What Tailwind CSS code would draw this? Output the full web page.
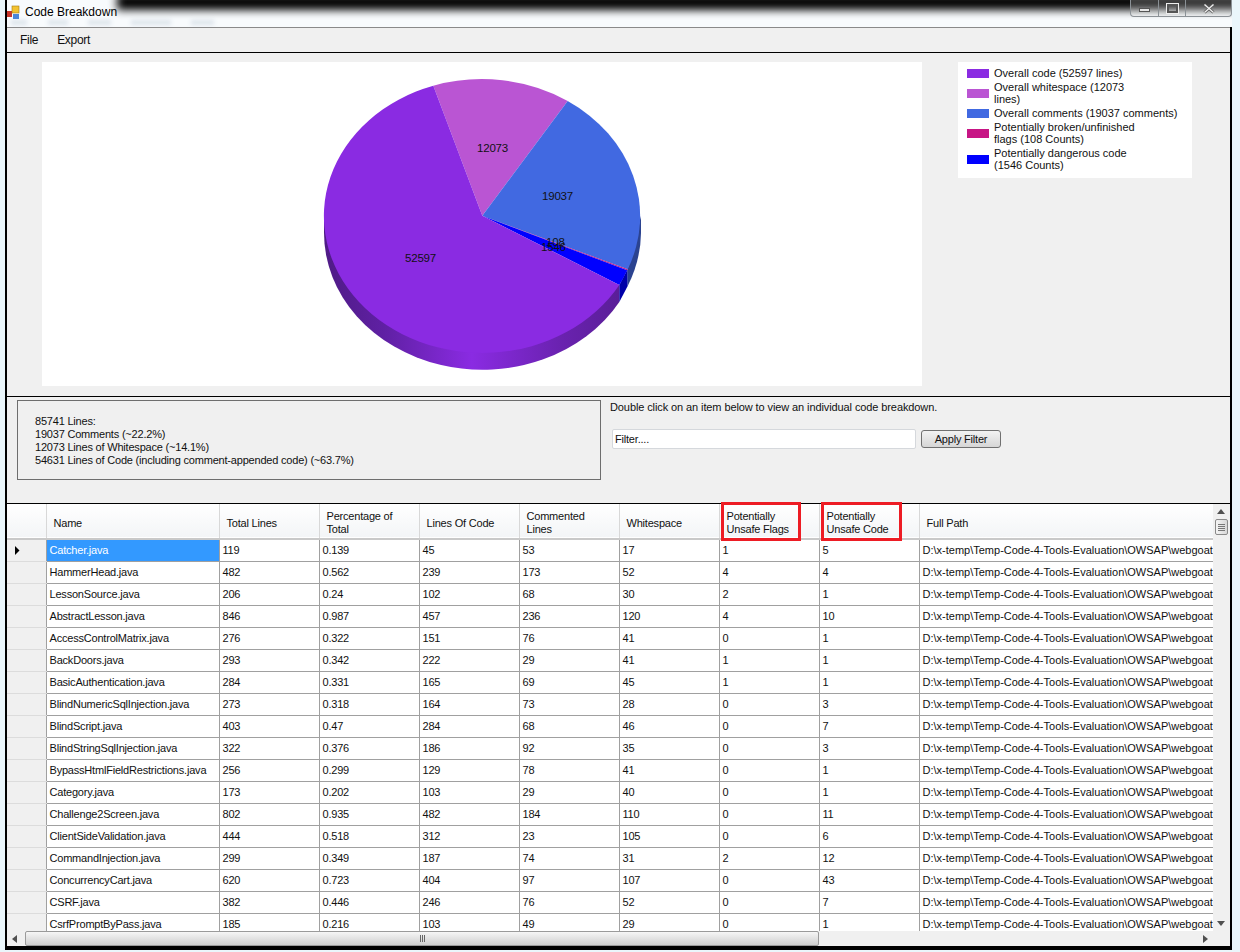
<!DOCTYPE html>
<html>
  <head>
    <meta charset="UTF-8" />
    <title>Code Breakdown</title>
    <script src="https://cdn.jsdelivr.net/npm/@tailwindcss/browser@4"></script>
  </head>
  <body class="w-[1240px] h-[952px] overflow-hidden bg-[#eaf6fb] font-['Liberation_Sans',sans-serif] text-[11px] tracking-[-0.2px] text-[#111]">
    <div class="pl-[5px] pr-[8px] h-[950px] flex flex-col">
      <!-- title bar -->
      <div class="h-[27px] shrink-0 flex items-start relative overflow-hidden bg-[#f8fbfd] border-l-2 border-black">
        <!-- blurred desktop behind the glass -->
        <div class="absolute left-[110px] right-[-20px] top-[-6px] h-[16px] bg-black blur-[4px]"></div>
        <div class="absolute left-[4px] top-[20px] w-[16px] h-[5px] bg-[#9fb4c4]/30 blur-[2px]"></div>
        <div class="absolute left-[41px] top-[20px] w-[20px] h-[5px] bg-[#9fb4c4]/30 blur-[2px]"></div>
        <div class="absolute left-[81px] top-[20px] w-[23px] h-[5px] bg-[#9fb4c4]/30 blur-[2px]"></div>
        <div class="absolute left-[124px] top-[20px] w-[40px] h-[5px] bg-[#9fb4c4]/30 blur-[2px]"></div>
        <div class="absolute left-[184px] top-[20px] w-[23px] h-[5px] bg-[#9fb4c4]/30 blur-[2px]"></div>
        <svg class="mt-[5px] -ml-[1px] relative" width="16" height="16" viewBox="0 0 16 16">
          <rect x="1" y="6" width="5" height="6" fill="#c8352a" />
          <rect x="6" y="1" width="7" height="7" fill="#f3c22f" stroke="#a67c12" stroke-width="0.6" />
          <rect x="7" y="9" width="6" height="5" fill="#4b86d8" />
        </svg>
        <span class="mt-[5px] ml-[3px] text-[12px] tracking-normal leading-[15px] text-black relative">Code Breakdown</span>
        <div class="absolute right-[0px] top-0 w-[102px] h-[17px] flex border border-t-0 border-[#8b9196] rounded-b-[4px] bg-white/20">
          <div class="w-[28px] border-r border-[#8b9196] flex justify-center items-end pb-[4px]"><div class="w-[11px] h-[4px] bg-[#e6e6e6] border border-[#555]"></div></div>
          <div class="w-[27px] border-r border-[#8b9196] flex justify-center items-center"><div class="w-[11px] h-[9px] border-2 border-[#555] outline outline-[#eee]"></div></div>
          <div class="flex-1 flex justify-center items-center">
            <svg width="12" height="11" viewBox="0 0 12 11"><path d="M1.5 1.5 L10.5 9.5 M10.5 1.5 L1.5 9.5" stroke="#555" stroke-width="3" /><path d="M1.5 1.5 L10.5 9.5 M10.5 1.5 L1.5 9.5" stroke="#eee" stroke-width="1.4" /></svg>
          </div>
        </div>
      </div>

      <div class="flex-1 flex flex-col border-l-2 border-r-2 border-b-4 border-black bg-[#f0f0f0] min-h-0">
        <!-- menu -->
        <div class="h-[26px] shrink-0 bg-[#f0f0f0] border-b border-black border-t border-t-[#8a8a8a] flex items-center gap-[19px] pl-[13px] text-[12px] tracking-[-0.3px]">
          <span>File</span>
          <span>Export</span>
        </div>

        <!-- chart area -->
        <div class="h-[344px] shrink-0 border-b border-black pt-[9px] pl-[35px] flex items-start">
          <div class="w-[880px] h-[324px] bg-white shrink-0">
            <svg width="880" height="324" viewBox="42 62 880 324" font-family="Liberation Sans" font-size="11.5" fill="#111">
              <defs>
                <linearGradient id="sidePurple" x1="0" x2="1" y1="0" y2="0">
                  <stop offset="0" stop-color="#4f1b86" />
                  <stop offset="0.2" stop-color="#5f20a3" />
                  <stop offset="0.5" stop-color="#8a2be2" />
                  <stop offset="0.8" stop-color="#6a22b0" />
                  <stop offset="1" stop-color="#5a1e98" />
                </linearGradient>
              </defs>
              <!-- side wall -->
              <path d="M324 216 L324 233 A158.5 137 0 0 0 619.3 302 L619.3 285 Z" fill="url(#sidePurple)" />
              <path d="M619.3 285 L619.3 302 L627.7 286 L627.7 269 Z" fill="#0000a8" />
              <path d="M627.7 269 L627.7 286 A158.5 137 0 0 0 641 233 L641 216 Z" fill="#2b4390" />
              <!-- top face -->
              <path d="M482.3 215.7 L433.3 85.7 A158.5 137 0 0 1 567.7 101 Z" fill="#ba55d3" />
              <path d="M482.3 215.7 L567.7 101 A158.5 137 0 0 1 627.7 269.3 Z" fill="#4169e1" />
              <path d="M482.3 215.7 L627.7 269.3 L627.2 270.3 Z" fill="#c71585" />
              <path d="M482.3 215.7 L627.2 270.3 A158.5 137 0 0 1 619.3 285 Z" fill="#0000ff" />
              <path d="M482.3 215.7 L619.3 285 A158.5 137 0 1 1 433.3 85.7 Z" fill="#8a2be2" />
              <text x="477" y="152">12073</text>
              <text x="542" y="200">19037</text>
              <text x="405" y="262">52597</text>
              <text x="546" y="246">108</text>
              <text x="541" y="251">1546</text>
            </svg>
          </div>
          <!-- legend -->
          <div class="w-[234px] h-[116px] ml-[36px] bg-white pt-[5px] pl-[9px] flex flex-col leading-[12px] tracking-normal">
            <div class="flex items-center h-[12px] mb-[2px]"><span class="w-[22px] h-[9px] bg-[#8a2be2] mr-[5px]"></span><span class="whitespace-nowrap">Overall code (52597 lines)</span></div>
            <div class="flex items-center h-[24px] mb-[2px]"><span class="w-[22px] h-[9px] bg-[#ba55d3] mr-[5px]"></span><span class="whitespace-nowrap">Overall whitespace (12073<br />lines)</span></div>
            <div class="flex items-center h-[12px] mb-[2px]"><span class="w-[22px] h-[9px] bg-[#4169e1] mr-[5px]"></span><span class="whitespace-nowrap">Overall comments (19037 comments)</span></div>
            <div class="flex items-center h-[24px] mb-[2px]"><span class="w-[22px] h-[9px] bg-[#c71585] mr-[5px]"></span><span class="whitespace-nowrap">Potentially broken/unfinished<br />flags (108 Counts)</span></div>
            <div class="flex items-center h-[24px]"><span class="w-[22px] h-[9px] bg-[#0000ff] mr-[5px]"></span><span class="whitespace-nowrap">Potentially dangerous code<br />(1546 Counts)</span></div>
          </div>
        </div>

        <!-- summary and filter -->
        <div class="h-[107px] shrink-0 border-b border-black flex items-start pt-[3px] pl-[10px]">
          <div class="w-[584px] h-[80px] border border-[#6e6e6e] pt-[14px] pl-[17px] leading-[13px]">
            <div>85741 Lines:</div>
            <div>19037 Comments (~22.2%)</div>
            <div>12073 Lines of Whitespace (~14.1%)</div>
            <div>54631 Lines of Code (including comment-appended code) (~63.7%)</div>
          </div>
          <div class="ml-[9px] flex flex-col">
            <div class="leading-[14px] tracking-[-0.1px]">Double click on an item below to view an individual code breakdown.</div>
            <div class="flex items-center mt-[15px] ml-[2px]">
              <div class="w-[304px] h-[20px] bg-white border border-[#d5d8dc] rounded-[2px] pl-[2px] leading-[18px]">Filter....</div>
              <div class="w-[80px] h-[18px] ml-[5px] border border-[#707070] rounded-[3px] bg-gradient-to-b from-[#f2f2f2] to-[#d6d6d6] text-center leading-[16px]">Apply Filter</div>
            </div>
          </div>
        </div>

        <!-- grid -->
        <div class="flex-1 min-h-0 flex flex-col">
          <div class="flex-1 min-h-0 flex">
            <div class="w-[1206px] overflow-hidden">
              <table class="table-fixed border-collapse w-[1206px]">
                <colgroup>
                  <col class="w-[39px]" /><col class="w-[173px]" /><col class="w-[100px]" /><col class="w-[100px]" /><col class="w-[100px]" /><col class="w-[100px]" /><col class="w-[100px]" /><col class="w-[100px]" /><col class="w-[100px]" /><col class="w-[294px]" />
                </colgroup>
                <thead>
                  <tr class="h-[35px] bg-gradient-to-b from-white to-[#f3f5f7] text-left leading-[13px] border-b-2 border-[#c9c9c9]">
                    <th class="font-normal border-r border-[#d8d8d8]"></th>
                    <th class="font-normal pl-[7px] pt-[4px] border-r border-[#d8d8d8]">Name</th>
                    <th class="font-normal pl-[7px] pt-[4px] border-r border-[#d8d8d8]">Total Lines</th>
                    <th class="font-normal pl-[7px] pt-[4px] border-r border-[#d8d8d8]">Percentage of<br />Total</th>
                    <th class="font-normal pl-[7px] pt-[4px] border-r border-[#d8d8d8]">Lines Of Code</th>
                    <th class="font-normal pl-[7px] pt-[4px] border-r border-[#d8d8d8]">Commented<br />Lines</th>
                    <th class="font-normal pl-[7px] pt-[4px] border-r border-[#d8d8d8]">Whitespace</th>
                    <th class="font-normal pl-[7px] pt-[4px] border-r border-[#d8d8d8]">Potentially<br />Unsafe Flags</th>
                    <th class="font-normal pl-[7px] pt-[4px] border-r border-[#d8d8d8]">Potentially<br />Unsafe Code</th>
                    <th class="font-normal pl-[7px] pt-[4px]">Full Path</th>
                  </tr>
                </thead>
                <tbody id="rows" class="bg-white">
                  <tr class="h-[22px] border-b border-[#a0a0a0]"><td class="bg-[#f0f0f0] border-r border-[#a0a0a0] border-b border-b-[#dcdcdc]"><svg class="ml-[7px]" width="6" height="9" viewBox="0 0 6 9"><path d="M1 0 L5.5 4.5 L1 9 Z" fill="#000" /></svg></td><td class="pl-[3px] bg-[#3399ff] text-white border-r border-[#a0a0a0]">Catcher.java</td><td class="pl-[3px] border-r border-[#a0a0a0]">119</td><td class="pl-[3px] border-r border-[#a0a0a0]">0.139</td><td class="pl-[3px] border-r border-[#a0a0a0]">45</td><td class="pl-[3px] border-r border-[#a0a0a0]">53</td><td class="pl-[3px] border-r border-[#a0a0a0]">17</td><td class="pl-[3px] border-r border-[#a0a0a0]">1</td><td class="pl-[3px] border-r border-[#a0a0a0]">5</td><td class="pl-[3px] tracking-normal whitespace-nowrap overflow-hidden">D:\x-temp\Temp-Code-4-Tools-Evaluation\OWSAP\webgoat</td></tr>
                </tbody>
              </table>
            </div>
            <!-- vertical scrollbar -->
            <div class="w-[16px] bg-[#f0f0f0] flex flex-col items-center pt-[5px]">
              <svg width="8" height="5" viewBox="0 0 8 5"><path d="M4 0 L8 5 L0 5 Z" fill="#505050" /></svg>
              <div class="w-[13px] h-[16px] mt-[5px] border border-[#8a8a8a] rounded-[2px] bg-gradient-to-r from-[#f4f4f4] to-[#d8d8d8] flex flex-col items-center justify-center gap-[1px]">
                <div class="w-[7px] h-px bg-[#777]"></div><div class="w-[7px] h-px bg-[#777]"></div><div class="w-[7px] h-px bg-[#777]"></div><div class="w-[7px] h-px bg-[#777]"></div>
              </div>
              <div class="flex-1"></div>
              <svg class="mb-[5px]" width="8" height="5" viewBox="0 0 8 5"><path d="M0 0 L8 0 L4 5 Z" fill="#505050" /></svg>
            </div>
          </div>
          <!-- horizontal scrollbar -->
          <div class="h-[15px] shrink-0 flex items-center bg-[#f0f0f0]">
            <svg class="ml-[5px] mr-[8px]" width="5" height="8" viewBox="0 0 5 8"><path d="M5 0 L5 8 L0 4 Z" fill="#505050" /></svg>
            <div class="w-[794px] h-[15px] border border-[#9a9a9a] rounded-[2px] bg-gradient-to-b from-[#f6f6f6] to-[#cfcfcf] flex justify-center items-center gap-[1px]">
              <div class="w-px h-[7px] bg-[#666]"></div><div class="w-px h-[7px] bg-[#666]"></div><div class="w-px h-[7px] bg-[#666]"></div>
            </div>
            <div class="flex-1"></div>
            <svg class="mr-[22px]" width="5" height="8" viewBox="0 0 5 8"><path d="M0 0 L5 4 L0 8 Z" fill="#505050" /></svg>
          </div>
        </div>
      </div>
    </div>
    <!-- red highlights drawn over the two header cells -->
    <div class="absolute left-[721px] top-[502px] w-[80px] h-[39px] border-[3px] border-[#ed1c24]"></div>
    <div class="absolute left-[821px] top-[502px] w-[81px] h-[39px] border-[3px] border-[#ed1c24]"></div>
    <script>
      const data = [
        ["HammerHead.java", 482, 0.562, 239, 173, 52, 4, 4],
        ["LessonSource.java", 206, 0.24, 102, 68, 30, 2, 1],
        ["AbstractLesson.java", 846, 0.987, 457, 236, 120, 4, 10],
        ["AccessControlMatrix.java", 276, 0.322, 151, 76, 41, 0, 1],
        ["BackDoors.java", 293, 0.342, 222, 29, 41, 1, 1],
        ["BasicAuthentication.java", 284, 0.331, 165, 69, 45, 1, 1],
        ["BlindNumericSqlInjection.java", 273, 0.318, 164, 73, 28, 0, 3],
        ["BlindScript.java", 403, 0.47, 284, 68, 46, 0, 7],
        ["BlindStringSqlInjection.java", 322, 0.376, 186, 92, 35, 0, 3],
        ["BypassHtmlFieldRestrictions.java", 256, 0.299, 129, 78, 41, 0, 1],
        ["Category.java", 173, 0.202, 103, 29, 40, 0, 1],
        ["Challenge2Screen.java", 802, 0.935, 482, 184, 110, 0, 11],
        ["ClientSideValidation.java", 444, 0.518, 312, 23, 105, 0, 6],
        ["CommandInjection.java", 299, 0.349, 187, 74, 31, 2, 12],
        ["ConcurrencyCart.java", 620, 0.723, 404, 97, 107, 0, 43],
        ["CSRF.java", 382, 0.446, 246, 76, 52, 0, 7],
        ["CsrfPromptByPass.java", 185, 0.216, 103, 49, 29, 0, 1],
      ];
      const path = "D:\\x-temp\\Temp-Code-4-Tools-Evaluation\\OWSAP\\webgoat";
      const cell = "pl-[3px] border-r border-[#a0a0a0]";
      const tbody = document.querySelector("#rows");
      data.forEach((row) => {
        const cells = row.map((v) => `<td class="${cell}">${v}</td>`).join("");
        tbody.insertAdjacentHTML(
          "beforeend",
          `<tr class="h-[22px] border-b border-[#a0a0a0]"><td class="bg-[#f0f0f0] border-r border-[#a0a0a0] border-b border-b-[#dcdcdc]"></td>${cells}<td class="pl-[3px] tracking-normal whitespace-nowrap overflow-hidden">${path}</td></tr>`
        );
      });
    </script>
  </body>
</html>
